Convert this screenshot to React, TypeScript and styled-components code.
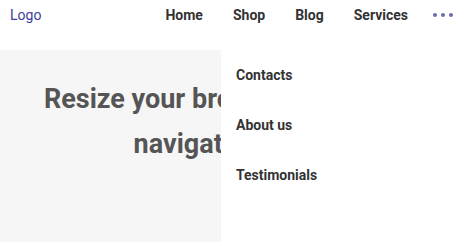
import React, {useState} from 'react'
import styled, {createGlobalStyle} from "styled-components";

const GlobalStyle = createGlobalStyle`
  html, body {
    margin: 0;
    padding: 0;
    background: #fff;
    font-family: Roboto, "Liberation Sans", Arial, sans-serif;
  }
`;

const Page = styled.div`
  position: relative;
  width: 460px;
  height: 242px;
  overflow: hidden;
`;

const Header = styled.header`
  display: flex;
  align-items: center;
  justify-content: space-between;
  height: 30px;
  padding: 0 7px 0 10px;
`;

const Logo = styled.a`
  color: #3d3d9b;
  font-size: 14px;
  text-decoration: none;
`;

const NavList = styled.ul`
  display: flex;
  align-items: center;
  list-style: none;
  margin: 0;
  padding: 0;
`;

const NavItem = styled.li`
  padding: 0 15px;
  font-size: 14px;
  font-weight: 700;
  color: #333;
`;

const MoreButton = styled.button`
  display: flex;
  align-items: center;
  gap: 4px;
  margin-left: 10px;
  padding: 0;
  background: none;
  border: 0;
  cursor: pointer;
`;

const Dot = styled.span`
  width: 4px;
  height: 4px;
  border-radius: 50%;
  background: #6a6ab0;
`;

const Dropdown = styled.ul`
  position: absolute;
  top: 50px;
  left: 221px;
  right: 0;
  bottom: 0;
  margin: 0;
  padding: 0;
  list-style: none;
  background: #fff;
`;

const DropItem = styled.li`
  height: 50px;
  display: flex;
  align-items: center;
  padding-left: 15px;
  font-size: 14px;
  font-weight: 700;
  color: #333;
`;

const Hero = styled.main`
  margin-top: 20px;
  height: 192px;
  background: #f6f6f6;
  padding: 27px 30px 0;
  box-sizing: border-box;
`;

const Title = styled.h1`
  margin: 0;
  text-align: center;
  font-size: 27px;
  line-height: 45px;
  font-weight: 700;
  color: #555;
`;

const links = ["Home", "Shop", "Blog", "Services"];
const more = ["Contacts", "About us", "Testimonials"];

function App() {
    const [open, setOpen] = useState(true);

    return (
        <Page>
            <GlobalStyle/>
            <Header>
                <Logo href="#">Logo</Logo>
                <NavList>
                    {links.map(l => <NavItem key={l}>{l}</NavItem>)}
                    <MoreButton onClick={() => setOpen(!open)} aria-label="More">
                        <Dot/><Dot/><Dot/>
                    </MoreButton>
                </NavList>
            </Header>
            <Hero>
                <Title>Resize your browser to see the navigation work</Title>
            </Hero>
            {open ? (
                <Dropdown>
                    {more.map(m => <DropItem key={m}>{m}</DropItem>)}
                </Dropdown>
            ) : ""}
        </Page>
    )
}

export default App;
